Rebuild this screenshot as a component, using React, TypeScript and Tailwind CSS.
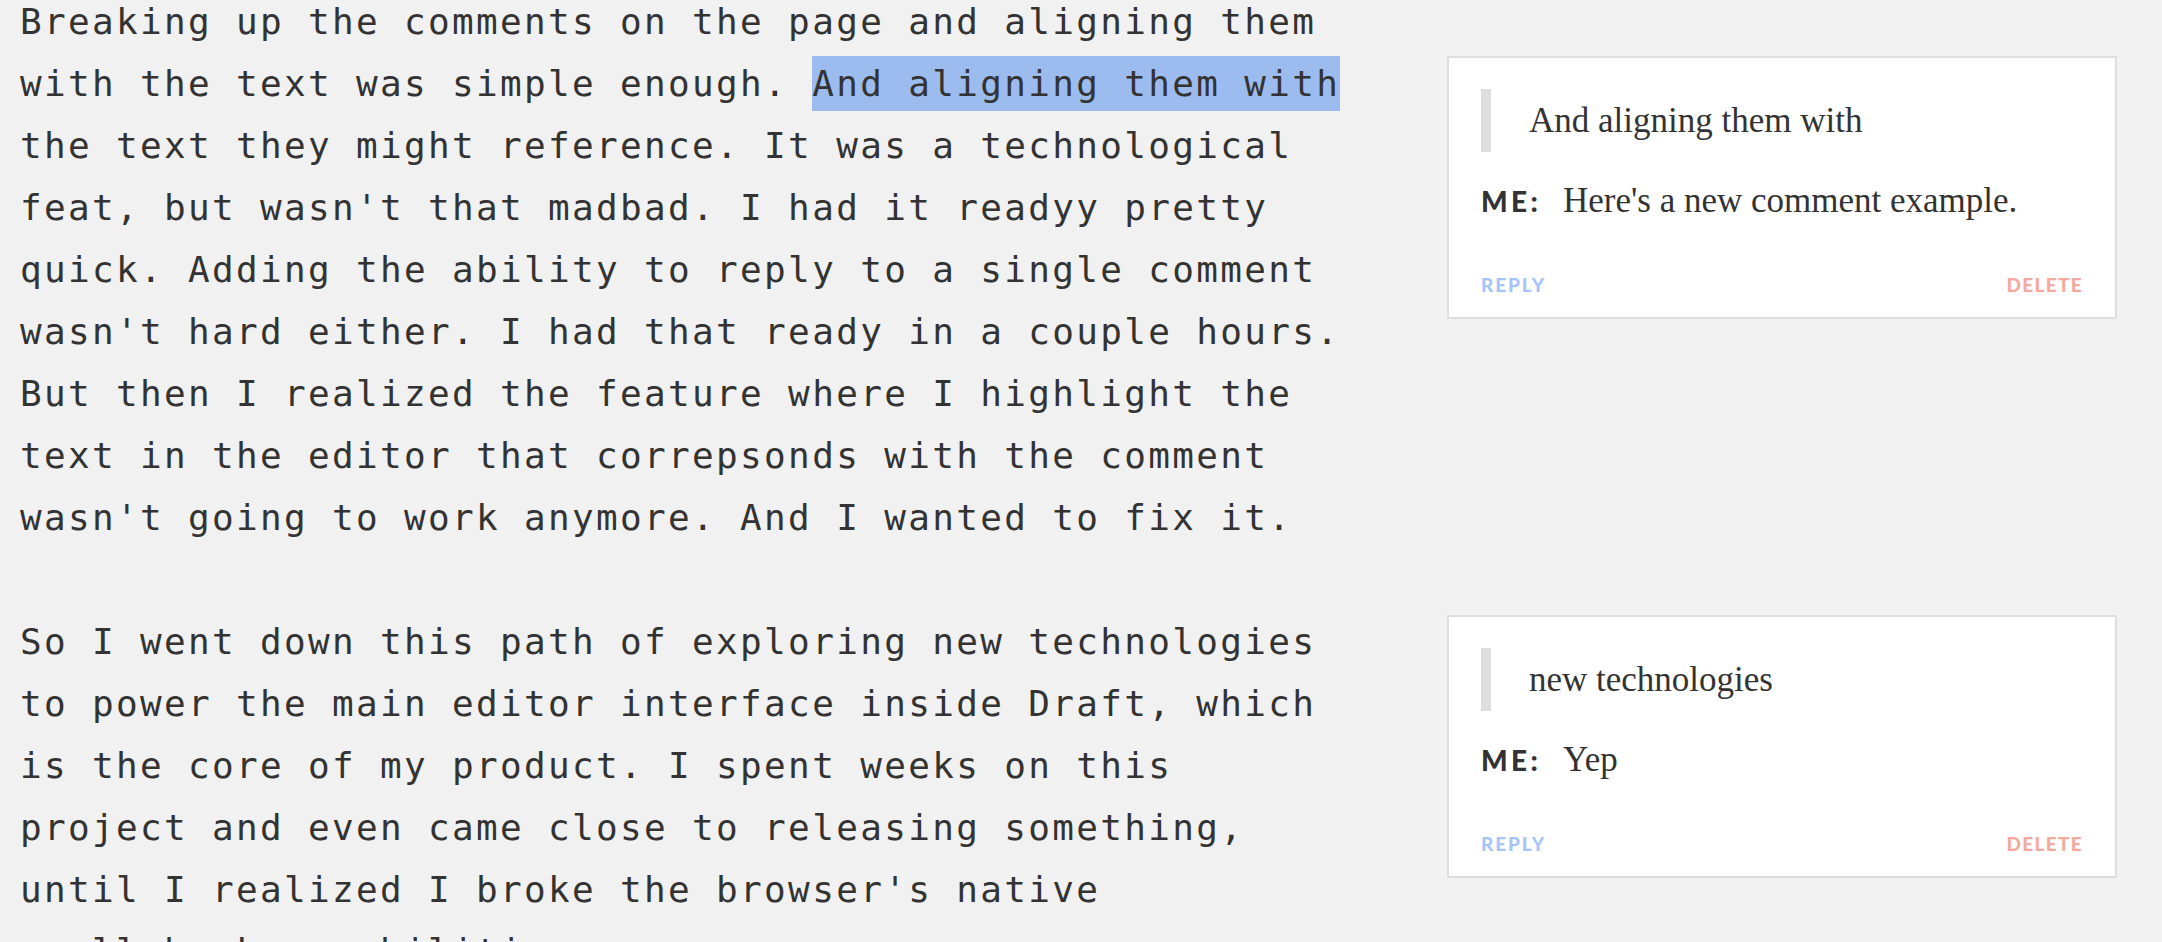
import React from "react";

const mono = { fontFamily: '"DejaVu Sans Mono", monospace' };

function Card({ quote, body }: { quote: string; body: string }) {
  return (
    <div className="h-[263px] w-[670px] border-2 border-[#dedede] bg-white flex flex-col pt-[31px] pl-[32px] pr-[32px]">
      <div className="h-[63px] border-l-[10px] border-[#dedede] pl-[38px] text-[35px] leading-[64px] text-[#333333] [font-family:'Liberation_Serif',serif]">
        {quote}
      </div>
      <div className="mt-[29px] flex items-baseline text-[#333333]">
        <span className="w-[82px] shrink-0 text-[28px] leading-[40px] font-black tracking-[0.12em] [font-family:Lato,sans-serif]">
          ME:
        </span>
        <span className="text-[35px] leading-[40px] [font-family:'Liberation_Serif',serif]">{body}</span>
      </div>
      <div className="mt-auto pb-[22px] flex justify-between text-[19px] leading-[20px] font-black [font-family:Lato,sans-serif]">
        <span className="text-[#a6c4f8] tracking-[0.1em]">REPLY</span>
        <span className="text-[#f3aa9e] tracking-[0.07em]">DELETE</span>
      </div>
    </div>
  );
}

export default function App() {
  return (
    <div className="w-[2162px] h-[942px] overflow-hidden bg-[#f1f1f1] flex items-start">
      <div
        className="ml-[20px] mt-[-9px] w-[1332px] shrink-0 text-[36px] leading-[62px] tracking-[2.33px] text-[#333333]"
        style={mono}
      >
        <p>
          Breaking up the comments on the page and aligning them with the text was simple enough.{" "}
          <span className="bg-[#9cbcf0] pt-[7px] pb-[7px]">And aligning them with</span> the text they might
          reference. It was a technological feat, but wasn't that madbad. I had it readyy pretty quick. Adding
          the ability to reply to a single comment wasn't hard either. I had that ready in a couple hours. But
          then I realized the feature where I highlight the text in the editor that correpsonds with the comment
          wasn't going to work anymore. And I wanted to fix it.
        </p>
        <p className="mt-[62px]">
          So I went down this path of exploring new technologies to power the main editor interface inside
          Draft, which is the core of my product. I spent weeks on this project and even came close to releasing
          something, until I realized I broke the browser's native spellcheck capabilities.
        </p>
      </div>
      <div className="ml-[95px] w-[670px] shrink-0 flex flex-col">
        <div className="mt-[56px]">
          <Card quote="And aligning them with" body="Here's a new comment example." />
        </div>
        <div className="mt-[296px]">
          <Card quote="new technologies" body="Yep" />
        </div>
      </div>
    </div>
  );
}
